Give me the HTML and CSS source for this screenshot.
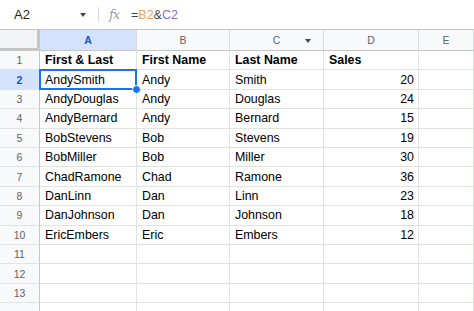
FILE: index.html
```html
<!DOCTYPE html>
<html lang="en">
<head>
    <meta charset="UTF-8">
    <title>Sheet</title>
    <link rel="stylesheet" href="styles.css">
</head>
<body>
    <div class="formula-bar">
        <span class="name-box">A2</span>
        <span class="name-arrow"></span>
        <span class="bar-sep"></span>
        <span class="fx">fx</span>
        <span class="formula">=<span class="ref-b">B2</span>&amp;<span class="ref-c">C2</span></span>
    </div>

    <div class="sheet">
        <div class="row head">
            <div class="corner"></div>
            <div class="col-head active">A</div>
            <div class="col-head">B</div>
            <div class="col-head">C<span class="filter-arrow"></span></div>
            <div class="col-head">D</div>
            <div class="col-head">E</div>
        </div>
        <div class="row bold">
            <div class="row-head">1</div>
            <div class="cell">First &amp; Last</div>
            <div class="cell">First Name</div>
            <div class="cell">Last Name</div>
            <div class="cell">Sales</div>
            <div class="cell"></div>
        </div>
        <div class="row">
            <div class="row-head active">2</div>
            <div class="cell selected">AndySmith<span class="handle"></span></div>
            <div class="cell">Andy</div>
            <div class="cell">Smith</div>
            <div class="cell num">20</div>
            <div class="cell"></div>
        </div>
        <div class="row">
            <div class="row-head">3</div>
            <div class="cell">AndyDouglas</div>
            <div class="cell">Andy</div>
            <div class="cell">Douglas</div>
            <div class="cell num">24</div>
            <div class="cell"></div>
        </div>
        <div class="row">
            <div class="row-head">4</div>
            <div class="cell">AndyBernard</div>
            <div class="cell">Andy</div>
            <div class="cell">Bernard</div>
            <div class="cell num">15</div>
            <div class="cell"></div>
        </div>
        <div class="row">
            <div class="row-head">5</div>
            <div class="cell">BobStevens</div>
            <div class="cell">Bob</div>
            <div class="cell">Stevens</div>
            <div class="cell num">19</div>
            <div class="cell"></div>
        </div>
        <div class="row">
            <div class="row-head">6</div>
            <div class="cell">BobMiller</div>
            <div class="cell">Bob</div>
            <div class="cell">Miller</div>
            <div class="cell num">30</div>
            <div class="cell"></div>
        </div>
        <div class="row">
            <div class="row-head">7</div>
            <div class="cell">ChadRamone</div>
            <div class="cell">Chad</div>
            <div class="cell">Ramone</div>
            <div class="cell num">36</div>
            <div class="cell"></div>
        </div>
        <div class="row">
            <div class="row-head">8</div>
            <div class="cell">DanLinn</div>
            <div class="cell">Dan</div>
            <div class="cell">Linn</div>
            <div class="cell num">23</div>
            <div class="cell"></div>
        </div>
        <div class="row">
            <div class="row-head">9</div>
            <div class="cell">DanJohnson</div>
            <div class="cell">Dan</div>
            <div class="cell">Johnson</div>
            <div class="cell num">18</div>
            <div class="cell"></div>
        </div>
        <div class="row">
            <div class="row-head">10</div>
            <div class="cell">EricEmbers</div>
            <div class="cell">Eric</div>
            <div class="cell">Embers</div>
            <div class="cell num">12</div>
            <div class="cell"></div>
        </div>
        <div class="row">
            <div class="row-head">11</div>
            <div class="cell"></div><div class="cell"></div><div class="cell"></div><div class="cell"></div><div class="cell"></div>
        </div>
        <div class="row">
            <div class="row-head">12</div>
            <div class="cell"></div><div class="cell"></div><div class="cell"></div><div class="cell"></div><div class="cell"></div>
        </div>
        <div class="row">
            <div class="row-head">13</div>
            <div class="cell"></div><div class="cell"></div><div class="cell"></div><div class="cell"></div><div class="cell"></div>
        </div>
        <div class="row">
            <div class="row-head"></div>
            <div class="cell"></div><div class="cell"></div><div class="cell"></div><div class="cell"></div><div class="cell"></div>
        </div>
    </div>
</body>
</html>
```

FILE: styles.css
```css
* {
    box-sizing: border-box;
}
body {
    margin: 0;
    width: 474px;
    height: 311px;
    overflow: hidden;
    background: #ffffff;
    font-family: "Liberation Sans", Arial, sans-serif;
    color: #1f1f1f;
}

/* formula bar */
.formula-bar {
    height: 29px;
    display: flex;
    align-items: center;
    padding-left: 14px;
}
.name-box {
    font-size: 13px;
    width: 66px;
}
.name-arrow {
    width: 0;
    height: 0;
    border-left: 3.5px solid transparent;
    border-right: 3.5px solid transparent;
    border-top: 4px solid #444746;
    margin-right: 12px;
}
.bar-sep {
    width: 1px;
    height: 15px;
    background: #dadce0;
    margin-right: 10px;
}
.fx {
    font-family: "DejaVu Serif", "Liberation Serif", serif;
    font-style: italic;
    font-size: 13px;
    color: #9aa0a6;
    width: 22px;
    letter-spacing: -1px;
}
.formula {
    font-size: 12.5px;
    color: #444746;
}
.ref-b {
    color: #f0a15a;
}
.ref-c {
    color: #9168d0;
}

/* grid */
.sheet {
    width: 474px;
    border-top: 1px solid #c4c7c5;
}
.row {
    display: grid;
    grid-template-columns: 40px 97px 93px 94px 95px 1fr;
    height: 19.42px;
    font-size: 12.4px;
}
.row.head {
    height: 21px;
}
.row.bold {
    font-weight: bold;
}
.corner {
    background: #f1f3f4;
    border-right: 3px solid #c4c7c5;
    border-bottom: 3px solid #c4c7c5;
}
.col-head {
    position: relative;
    display: flex;
    align-items: center;
    justify-content: center;
    background: #f8f9fa;
    border-right: 1px solid #dadce0;
    border-bottom: 1px solid #c4c7c5;
    font-size: 10.5px;
    color: #5f6368;
}
.col-head.active {
    background: #d3e3fd;
    color: #0b57d0;
    font-weight: bold;
}
.filter-arrow {
    position: absolute;
    right: 12px;
    top: 9px;
    width: 0;
    height: 0;
    border-left: 3.5px solid transparent;
    border-right: 3.5px solid transparent;
    border-top: 4px solid #444746;
}
.row-head {
    display: flex;
    align-items: center;
    justify-content: center;
    background: #f8f9fa;
    border-right: 1px solid #c4c7c5;
    border-bottom: 1px solid #e1e3e1;
    font-size: 10.5px;
    font-weight: normal;
    color: #5f6368;
}
.row-head.active {
    background: #d3e3fd;
    color: #0b57d0;
    font-weight: bold;
}
.cell {
    position: relative;
    display: flex;
    align-items: center;
    padding: 0 5px;
    border-right: 1px solid #e1e3e1;
    border-bottom: 1px solid #e1e3e1;
    white-space: nowrap;
    color: #000000;
}
.cell.num {
    justify-content: flex-end;
    padding-right: 4px;
}
.cell.selected::after {
    content: "";
    position: absolute;
    left: -1px;
    top: -1px;
    right: -1px;
    bottom: -1px;
    border: 2px solid #1a73e8;
}
.handle {
    position: absolute;
    right: -5px;
    bottom: -5px;
    width: 9px;
    height: 9px;
    border-radius: 50%;
    background: #1a73e8;
    border: 1px solid #ffffff;
    z-index: 1;
}
```
